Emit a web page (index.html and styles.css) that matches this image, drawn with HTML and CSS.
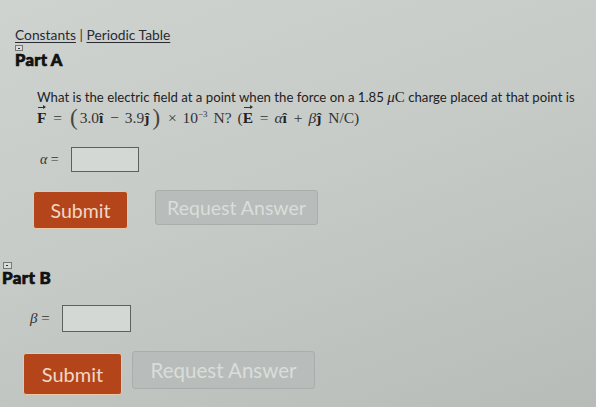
FILE: index.html
```html
<!DOCTYPE html>
<html>
<head>
<meta charset="utf-8">
<link rel="stylesheet" href="styles.css">
</head>
<body>
<div class="page">
  <div class="links"><a class="lnk">Constants</a> <span class="sep">|</span> <a class="lnk">Periodic Table</a></div>
  <section class="part part-a">
    <span class="toggle"></span>
    <h2 class="part-title">Part A</h2>
    <div class="question">
      <p class="q-line">What is the electric field at a point when the force on a 1.85 <span class="math unit"><i>μ</i>C</span> charge placed at that point is</p>
      <p class="q-line math-line"><span class="math"><b class="vec">F</b> = <span class="paren">(</span>3.0<b>î</b> − 3.9<b>ĵ</b><span class="paren">)</span> × 10<sup>−3</sup> N? (<b class="vec">E</b> = <i>α</i><b>î</b> + <i>β</i><b>ĵ</b> N/C)</span></p>
    </div>
    <div class="answer-row row-a"><span class="var"><i>α</i> =</span><span class="input"></span></div>
    <div class="buttons buttons-a"><span class="btn submit">Submit</span><span class="btn request">Request Answer</span></div>
  </section>
  <section class="part part-b">
    <span class="toggle"></span>
    <h2 class="part-title">Part B</h2>
    <div class="answer-row row-b"><span class="var"><i>β</i> =</span><span class="input"></span></div>
    <div class="buttons buttons-b"><span class="btn submit">Submit</span><span class="btn request">Request Answer</span></div>
  </section>
</div>
</body>
</html>
```
FILE: styles.css
```css
html, body { margin: 0; padding: 0; }
body {
  width: 596px; height: 407px; overflow: hidden;
  background: linear-gradient(160deg, #cfd3d0 0%, #c7cbc8 45%, #b8bcb9 100%);
  font-family: Lato, "Open Sans", sans-serif;
  color: #1e1e1e;
}
.page { padding: 26px 0 0 0; }
.links { margin-left: 15px; font-size: 13.8px; color: #2a2a33; line-height: 17px; }
.lnk { text-decoration: underline; text-underline-offset: 2px; }
.sep { color: #333; }
.toggle {
  display: block; width: 8px; height: 6px; box-sizing: border-box;
  border: 1px solid #777; background: #d9dcd9; position: relative;
}
.toggle::after { content: ""; position: absolute; left: 2px; top: 2px; width: 2px; height: 1px; background: #333; }
.part-a .toggle { margin: 2px 0 0 15px; }
.part-title { margin: 0; font-weight: 900; color: #111; -webkit-text-stroke: 0.7px #111; letter-spacing: 0.3px; }
.part-a .part-title { margin-left: 15px; font-size: 16.5px; line-height: 18px; }
.question { margin: 21px 0 0 37px; }
.q-line { margin: 0; font-size: 13.2px; line-height: 15px; color: #222; white-space: nowrap; }
.unit { font-size: 15px; }
.math { font-family: "Liberation Serif", "DejaVu Serif", serif; }
.math-line { font-size: 15.5px; line-height: 17px; margin-top: 1px; word-spacing: 2px; color: #333; }
.math-line .paren { font-size: 23px; vertical-align: -2px; color: #444; margin: 0 2px; }
.math-line sup { font-size: 9px; vertical-align: 6px; }
.math-line b { color: #222; margin-right: 1px; }
.vec { position: relative; display: inline-block; }
.vec::before {
  content: ""; position: absolute; left: 1px; right: 1px; top: -2px; height: 1px; background: #333;
}
.vec::after {
  content: ""; position: absolute; right: 0; top: -4px;
  border-left: 3px solid #333; border-top: 2.5px solid transparent; border-bottom: 2.5px solid transparent;
}
.answer-row { display: flex; align-items: center; }
.var { font-family: "Liberation Serif", serif; color: #333; }
.input { display: block; box-sizing: border-box; border: 1px solid #5d615e; background: #d4d8d5; }
.row-a { margin: 21px 0 0 40px; }
.row-a .var { font-size: 14px; width: 31px; }
.row-a .input { width: 68px; height: 25px; }
.buttons { display: flex; align-items: flex-start; }
.btn { display: flex; align-items: center; justify-content: center; box-sizing: border-box; border-radius: 3px; }
.submit { background: #b4451b; color: #f0d8c6; border: 1px solid #e8c8a8; }
.request { background: #b8bcba; color: #d9dedb; border: 1px solid #a9adab; }
.buttons-a { margin: 19px 0 0 33px; gap: 27px; }
.buttons-a .submit { width: 95px; height: 38px; font-size: 19.5px; }
.buttons-a .request { width: 163px; height: 35px; font-size: 19.5px; margin-top: -1px; }
.part-b { margin-top: 33px; }
.part-b .toggle { margin: 0 0 0 3px; width: 9px; height: 7px; }
.part-b .part-title { margin-left: 2px; font-size: 17px; line-height: 18px; }
.row-b { margin: 18px 0 0 30px; }
.row-b .var { font-size: 15px; width: 32px; }
.row-b .input { width: 69px; height: 27px; }
.buttons-b { margin: 21px 0 0 23px; gap: 10px; }
.buttons-b .submit { width: 99px; height: 42px; font-size: 20px; }
.buttons-b .request { width: 183px; height: 38px; font-size: 20.5px; margin-top: -2px; }
```
